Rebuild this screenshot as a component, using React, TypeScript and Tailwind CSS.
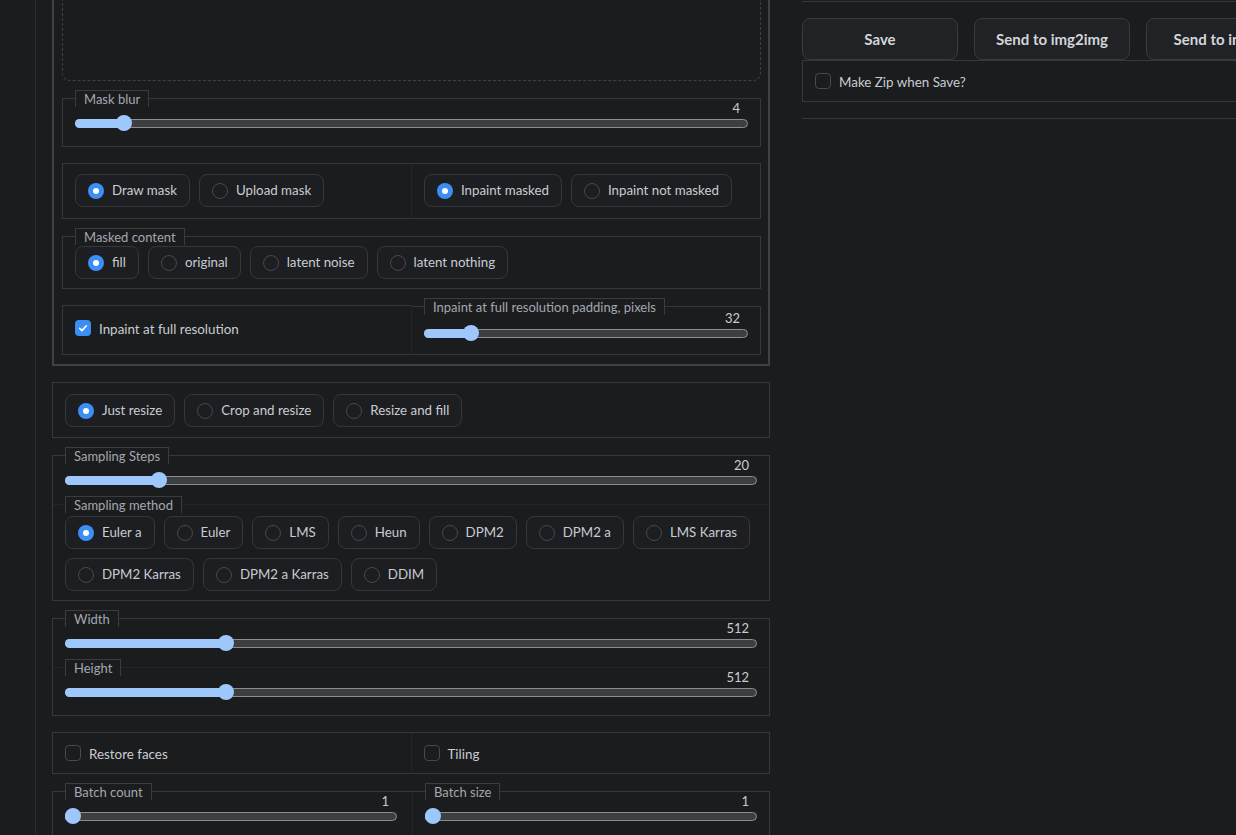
import React from "react";

const FONT = "font-[family-name:Lato,'Noto_Sans',sans-serif]";

function Legend({ children }: { children: React.ReactNode }) {
  return (
    <legend className="border border-b-0 border-[#3a3c40] px-2 text-[13px] leading-4 text-[#a2a8b0]">
      {children}
    </legend>
  );
}

function RadioPill({ label, checked = false }: { label: string; checked?: boolean }) {
  return (
    <div className="flex h-[33px] shrink-0 items-center gap-2 whitespace-nowrap rounded-lg border border-[#35373b] bg-[#1d1e21] pl-3 pr-3 text-[13.3px] text-[#c8ccd2]">
      {checked ? (
        <span className="flex h-4 w-4 items-center justify-center rounded-full bg-[#3b8ef3]">
          <span className="h-1.5 w-1.5 rounded-full bg-white" />
        </span>
      ) : (
        <span className="h-4 w-4 rounded-full border border-[#45484d]" />
      )}
      <span className="pt-px">{label}</span>
    </div>
  );
}

function Checkbox({ label, checked = false }: { label: string; checked?: boolean }) {
  return (
    <div className="flex items-center gap-2 whitespace-nowrap text-[13.4px] leading-4 text-[#c8ccd2]">
      {checked ? (
        <span className="flex h-4 w-4 items-center justify-center rounded-[4px] bg-[#3b8ef3]">
          <svg viewBox="0 0 16 16" className="h-3 w-3">
            <path d="M3.5 8.5l3 3 6-6.5" fill="none" stroke="white" strokeWidth="2.2" strokeLinecap="round" strokeLinejoin="round" />
          </svg>
        </span>
      ) : (
        <span className="h-4 w-4 rounded-[4px] border border-[#45484d]" />
      )}
      <span className="relative top-px">{label}</span>
    </div>
  );
}

function Slider({ value, min, max }: { value: number; min: number; max: number }) {
  const p = (value - min) / (max - min);
  const pos = `calc(8px + ${p} * (100% - 16px))`;
  return (
    <div className="relative flex h-4 items-center">
      <div className="h-[9px] w-full rounded-full border border-[#8b8d90] bg-[#3d3e40]" />
      <div className="absolute left-0 h-[9px] rounded-full bg-[#9ec8fb]" style={{ width: pos }} />
      <div className="absolute top-0 h-4 w-4 -translate-x-1/2 rounded-full bg-[#9ec8fb]" style={{ left: pos }} />
    </div>
  );
}

function SliderBody({ value, min, max }: { value: number; min: number; max: number }) {
  return (
    <>
      <div className="-mt-[7px] h-[15px] pr-2 text-right text-[13px] leading-4 text-[#c8ccd2]">{value}</div>
      <Slider value={value} min={min} max={max} />
    </>
  );
}

const SAMPLERS_1 = ["Euler a", "Euler", "LMS", "Heun", "DPM2", "DPM2 a", "LMS Karras"];
const SAMPLERS_2 = ["DPM2 Karras", "DPM2 a Karras", "DDIM"];

export default function App() {
  return (
    <div className={`${FONT} flex h-[835px] w-[1236px] overflow-hidden bg-[#1b1c1e]`}>
      {/* left gutter */}
      <div className="w-[36px] shrink-0 border-r border-[#2b2e30]" />

      {/* settings column */}
      <div className="flex w-[750px] shrink-0 flex-col gap-4 px-4">
        {/* inpaint group */}
        <div className="flex flex-col gap-4 border-2 border-t-0 border-[#3b4442] pb-[9px] pl-2 pr-[7px]">
          <div className="h-[81px] rounded-b-lg border border-t-0 border-dashed border-[#3f4144]" />

          <fieldset className="-mt-[7px] border border-[#36383b] px-3 pb-[15px]">
            <Legend>Mask blur</Legend>
            <SliderBody value={4} min={0} max={64} />
          </fieldset>

          <div className="flex border border-[#36383b]">
            <div className="flex flex-1 gap-[9px] border-r border-[#242629] px-3 pb-[11px] pt-[10px]">
              <RadioPill label="Draw mask" checked />
              <RadioPill label="Upload mask" />
            </div>
            <div className="flex flex-1 gap-[9px] px-3 pb-[11px] pt-[10px]">
              <RadioPill label="Inpaint masked" checked />
              <RadioPill label="Inpaint not masked" />
            </div>
          </div>

          <fieldset className="-mt-[7px] border border-[#36383b] px-3 pb-[9px]">
            <Legend>Masked content</Legend>
            <div className="mt-px flex gap-[9px]">
              <RadioPill label="fill" checked />
              <RadioPill label="original" />
              <RadioPill label="latent noise" />
              <RadioPill label="latent nothing" />
            </div>
          </fieldset>

          <div className="-mt-[7px] flex">
            <div className="mt-[7px] flex-1 border border-[#36383b] border-r-[#242629] px-3 pt-[14px]">
              <Checkbox label="Inpaint at full resolution" checked />
            </div>
            <fieldset className="flex-1 border border-l-0 border-[#36383b] px-3 pb-[13px]">
              <Legend>Inpaint at full resolution padding, pixels</Legend>
              <div className="mt-[2px]">
                <SliderBody value={32} min={0} max={256} />
              </div>
            </fieldset>
          </div>
        </div>

        {/* resize mode */}
        <div className="flex gap-[9px] border border-[#36383b] px-3 pb-[10px] pt-[11px]">
          <RadioPill label="Just resize" checked />
          <RadioPill label="Crop and resize" />
          <RadioPill label="Resize and fill" />
        </div>

        {/* sampling */}
        <div className="-mt-[7px] flex flex-col">
          <fieldset className="border-x border-t border-[#36383b] px-3 pb-[8px]">
            <Legend>Sampling Steps</Legend>
            <SliderBody value={20} min={1} max={150} />
          </fieldset>
          <div className="border-x border-b border-[#36383b]">
            <fieldset className="border-t border-[#232528] px-3 pb-[9px]">
              <Legend>Sampling method</Legend>
              <div className="mt-[3px] flex flex-col gap-[9px]">
                <div className="flex gap-[9px]">
                  {SAMPLERS_1.map((s) => (
                    <RadioPill key={s} label={s} checked={s === "Euler a"} />
                  ))}
                </div>
                <div className="flex gap-[9px]">
                  {SAMPLERS_2.map((s) => (
                    <RadioPill key={s} label={s} />
                  ))}
                </div>
              </div>
            </fieldset>
          </div>
        </div>

        {/* width / height */}
        <div className="-mt-[7px] flex flex-col">
          <fieldset className="border-x border-t border-[#36383b] px-3 pb-[8px]">
            <Legend>Width</Legend>
            <SliderBody value={512} min={64} max={2048} />
          </fieldset>
          <div className="border-x border-b border-[#36383b]">
            <fieldset className="border-t border-[#232528] px-3 pb-[15px]">
              <Legend>Height</Legend>
              <SliderBody value={512} min={64} max={2048} />
            </fieldset>
          </div>
        </div>

        {/* restore faces / tiling */}
        <div className="flex border border-[#36383b]">
          <div className="flex-1 border-r border-[#242629] px-3 py-3">
            <Checkbox label="Restore faces" />
          </div>
          <div className="flex-1 px-3 py-3">
            <Checkbox label="Tiling" />
          </div>
        </div>

        {/* batch */}
        <div className="-mt-[7px] flex">
          <fieldset className="flex-1 border border-[#36383b] border-r-[#242629] pb-[15px] pl-3 pr-[15px]">
            <Legend>Batch count</Legend>
            <SliderBody value={1} min={1} max={100} />
          </fieldset>
          <fieldset className="flex-1 border border-l-0 border-[#36383b] px-3 pb-[15px]">
            <Legend>Batch size</Legend>
            <SliderBody value={1} min={1} max={8} />
          </fieldset>
        </div>
      </div>

      {/* output column */}
      <div className="ml-4 w-[720px] shrink-0">
        <div className="mt-px h-px bg-[#36383b]" />
        <div className="mt-4 flex gap-4">
          {["Save", "Send to img2img", "Send to inpaint", "Send to extras"].map((b) => (
            <button
              key={b}
              className="h-[42px] w-[156px] rounded-lg border border-[#383a3e] bg-[#202225] text-[15px] font-bold text-[#d3d6da]"
            >
              {b}
            </button>
          ))}
        </div>
        <div className="flex h-[42px] items-center border border-[#36383b] px-3">
          <Checkbox label="Make Zip when Save?" />
        </div>
        <div className="mt-4 h-px bg-[#36383b]" />
      </div>
    </div>
  );
}
